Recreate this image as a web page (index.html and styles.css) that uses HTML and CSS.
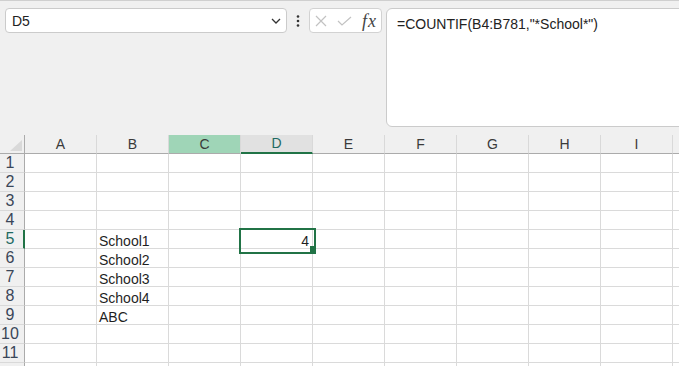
FILE: index.html
```html
<!DOCTYPE html>
<html lang="en">
<head>
    <meta charset="UTF-8">
    <meta name="viewport" content="width=device-width, initial-scale=1.0">
    <title>COUNTIF sheet</title>
    <link rel="stylesheet" href="styles.css">
</head>
<body>

<div class="toolbar">
    <div class="namebox">
        <span>D5</span>
        <svg width="10" height="6" viewBox="0 0 10 6"><polyline points="1,1 5,5 9,1" fill="none" stroke="#333" stroke-width="1.3"/></svg>
    </div>
    <div class="dots">
        <svg width="4" height="12" viewBox="0 0 4 12"><circle cx="2" cy="1.5" r="1.3" fill="#333"/><circle cx="2" cy="6" r="1.3" fill="#333"/><circle cx="2" cy="10.5" r="1.3" fill="#333"/></svg>
    </div>
    <div class="fxbox">
        <svg class="cancel" width="12" height="12" viewBox="0 0 12 12"><path d="M1 1 L11 11 M11 1 L1 11" stroke="#c2c2c2" stroke-width="1.2" fill="none"/></svg>
        <svg class="enter" width="15" height="10" viewBox="0 0 15 10"><polyline points="1,5 5,9 14,1" fill="none" stroke="#c2c2c2" stroke-width="1.2"/></svg>
        <span class="fx">fx</span>
    </div>
    <div class="formula">=COUNTIF(B4:B781,"*School*")</div>
</div>

<div class="sheet">
    <div class="row head">
        <div class="corner"><svg width="12" height="11" viewBox="0 0 12 11"><polygon points="12,0 12,11 0,11" fill="#d9d9d9"/></svg></div>
        <div class="ch">A</div>
        <div class="ch">B</div>
        <div class="ch col-hl">C</div>
        <div class="ch col-cur">D</div>
        <div class="ch">E</div>
        <div class="ch">F</div>
        <div class="ch">G</div>
        <div class="ch">H</div>
        <div class="ch">I</div>
        <div class="ch"></div>
    </div>
    <div class="row">
        <div class="rh">1</div>
        <div class="c"></div><div class="c"></div><div class="c"></div><div class="c"></div><div class="c"></div>
        <div class="c"></div><div class="c"></div><div class="c"></div><div class="c"></div><div class="c"></div>
    </div>
    <div class="row">
        <div class="rh">2</div>
        <div class="c"></div><div class="c"></div><div class="c"></div><div class="c"></div><div class="c"></div>
        <div class="c"></div><div class="c"></div><div class="c"></div><div class="c"></div><div class="c"></div>
    </div>
    <div class="row">
        <div class="rh">3</div>
        <div class="c"></div><div class="c"></div><div class="c"></div><div class="c"></div><div class="c"></div>
        <div class="c"></div><div class="c"></div><div class="c"></div><div class="c"></div><div class="c"></div>
    </div>
    <div class="row">
        <div class="rh">4</div>
        <div class="c"></div><div class="c"></div><div class="c"></div><div class="c"></div><div class="c"></div>
        <div class="c"></div><div class="c"></div><div class="c"></div><div class="c"></div><div class="c"></div>
    </div>
    <div class="row">
        <div class="rh row-cur">5</div>
        <div class="c"></div><div class="c">School1</div><div class="c"></div><div class="c num sel">4</div><div class="c"></div>
        <div class="c"></div><div class="c"></div><div class="c"></div><div class="c"></div><div class="c"></div>
    </div>
    <div class="row">
        <div class="rh">6</div>
        <div class="c"></div><div class="c">School2</div><div class="c"></div><div class="c"></div><div class="c"></div>
        <div class="c"></div><div class="c"></div><div class="c"></div><div class="c"></div><div class="c"></div>
    </div>
    <div class="row">
        <div class="rh">7</div>
        <div class="c"></div><div class="c">School3</div><div class="c"></div><div class="c"></div><div class="c"></div>
        <div class="c"></div><div class="c"></div><div class="c"></div><div class="c"></div><div class="c"></div>
    </div>
    <div class="row">
        <div class="rh">8</div>
        <div class="c"></div><div class="c">School4</div><div class="c"></div><div class="c"></div><div class="c"></div>
        <div class="c"></div><div class="c"></div><div class="c"></div><div class="c"></div><div class="c"></div>
    </div>
    <div class="row">
        <div class="rh">9</div>
        <div class="c"></div><div class="c">ABC</div><div class="c"></div><div class="c"></div><div class="c"></div>
        <div class="c"></div><div class="c"></div><div class="c"></div><div class="c"></div><div class="c"></div>
    </div>
    <div class="row">
        <div class="rh">10</div>
        <div class="c"></div><div class="c"></div><div class="c"></div><div class="c"></div><div class="c"></div>
        <div class="c"></div><div class="c"></div><div class="c"></div><div class="c"></div><div class="c"></div>
    </div>
    <div class="row">
        <div class="rh">11</div>
        <div class="c"></div><div class="c"></div><div class="c"></div><div class="c"></div><div class="c"></div>
        <div class="c"></div><div class="c"></div><div class="c"></div><div class="c"></div><div class="c"></div>
    </div>
    <div class="row">
        <div class="rh"></div>
        <div class="c"></div><div class="c"></div><div class="c"></div><div class="c"></div><div class="c"></div>
        <div class="c"></div><div class="c"></div><div class="c"></div><div class="c"></div><div class="c"></div>
    </div>
</div>

</body>
</html>
```

FILE: styles.css
```css
* {
    box-sizing: border-box;
}
body {
    margin: 0;
    height: 366px;
    overflow: hidden;
    background-color: #f0f0f0;
    font-family: "Liberation Sans", Arial, sans-serif;
    color: #1f1f1f;
}

/* formula bar */
.toolbar {
    display: flex;
    align-items: flex-start;
    height: 135px;
    padding: 7px 0 8px 5px;
    border-top: 1px solid #cfcfcf;
}
.namebox {
    width: 282px;
    height: 25px;
    display: flex;
    align-items: center;
    justify-content: space-between;
    padding: 0 5px 0 6px;
    background-color: #fff;
    border: 1px solid #cbcbcb;
    border-radius: 4px;
    font-size: 14px;
    color: #222;
}
.dots {
    width: 22px;
    height: 25px;
    display: flex;
    align-items: center;
    justify-content: center;
}
.fxbox {
    width: 73px;
    height: 25px;
    display: flex;
    align-items: center;
    padding-left: 5px;
    background-color: #fff;
    border: 1px solid #d2d2d2;
    border-radius: 4px;
}
.fxbox .enter {
    margin-left: 10px;
}
.fx {
    margin-left: 10px;
    font-family: "Liberation Serif", serif;
    font-style: italic;
    font-size: 18px;
    line-height: 20px;
    letter-spacing: 1px;
    color: #444;
}
.formula {
    flex: 1;
    height: 119px;
    margin: 0 -8px 0 4px;
    padding: 5px 10px;
    background-color: #fff;
    border: 1px solid #cbcbcb;
    border-radius: 6px;
    font-size: 14px;
    line-height: 20px;
    color: #222;
}

/* grid */
.sheet {
    height: 231px;
    overflow: hidden;
}
.row {
    display: grid;
    grid-template-columns: 25px repeat(10, 72px);
    height: 19px;
}
.corner {
    display: flex;
    align-items: flex-end;
    justify-content: flex-end;
    padding: 0 2px 2px 0;
    border-right: 1px solid #ababab;
    border-bottom: 1px solid #ababab;
}
.ch {
    border-right: 1px solid #d9d9d9;
    border-bottom: 1px solid #ababab;
    text-align: center;
    font-size: 14px;
    line-height: 18px;
    color: #3a3a3a;
}
.col-hl {
    background-color: #9fd5b7;
}
.col-cur {
    background-color: #e1e1e1;
    border-bottom: 2px solid #217346;
    line-height: 17px;
    color: #1f6a62;
}
.rh {
    padding-right: 4px;
    border-right: 1px solid #ababab;
    border-bottom: 1px solid #d9d9d9;
    text-align: center;
    font-size: 16px;
    line-height: 18px;
    color: #3a4658;
}
.row-cur {
    border-right: 2px solid #217346;
    padding-right: 3px;
    color: #1f6a62;
}
.c {
    padding: 4px 2px 0 2px;
    background-color: #fff;
    border-right: 1px solid #dadada;
    border-bottom: 1px solid #dadada;
    font-size: 14px;
    line-height: 14px;
    white-space: nowrap;
}
.num {
    text-align: right;
    padding-right: 3px;
}
/* active cell */
.sel {
    position: relative;
}
.sel::after {
    content: "";
    position: absolute;
    left: -2px;
    top: -2px;
    width: 73px;
    height: 22px;
    border: 2px solid #217346;
}
.sel::before {
    content: "";
    position: absolute;
    left: 69px;
    top: 16px;
    width: 6px;
    height: 6px;
    background-color: #217346;
    z-index: 1;
}
```
